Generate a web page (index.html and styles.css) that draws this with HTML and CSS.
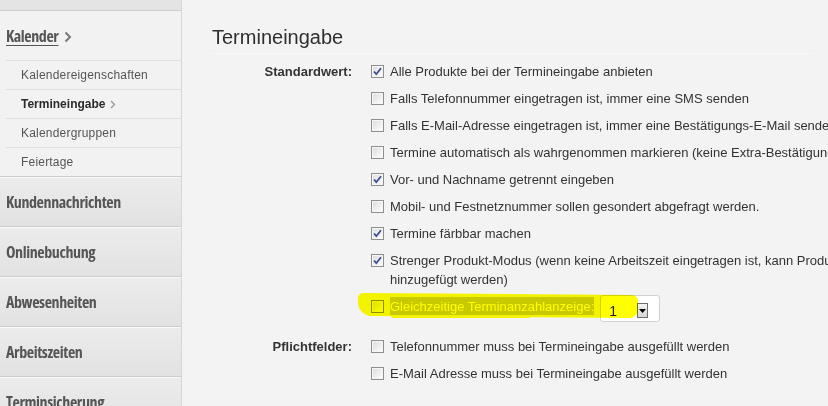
FILE: index.html
```html
<!DOCTYPE html>
<html lang="de">
<head>
<meta charset="utf-8">
<title>Termineingabe</title>
<link rel="stylesheet" href="styles.css">
</head>
<body>
<div class="page">
  <aside class="sidebar">
    <div class="nav-top"></div>
    <div class="nav-section">
      <div class="nav-head"><a class="nav-head-link" href="#"><span class="cond underline">Kalender</span></a><svg class="chev-big" viewBox="0 0 8 12" width="8" height="12"><path d="M1.5 1.5 L6 6 L1.5 10.5" fill="none" stroke="#7a7a7a" stroke-width="2"/></svg></div>
      <ul class="subnav">
        <li class="subnav-item">Kalendereigenschaften</li>
        <li class="subnav-item active">Termineingabe<svg class="chev-small" viewBox="0 0 6 9" width="6" height="9"><path d="M1 1 L4.5 4.5 L1 8" fill="none" stroke="#9a9a9a" stroke-width="1.4"/></svg></li>
        <li class="subnav-item">Kalendergruppen</li>
        <li class="subnav-item">Feiertage</li>
      </ul>
    </div>
    <div class="nav-block"><span class="cond">Kundennachrichten</span></div>
    <div class="nav-block"><span class="cond">Onlinebuchung</span></div>
    <div class="nav-block"><span class="cond">Abwesenheiten</span></div>
    <div class="nav-block"><span class="cond">Arbeitszeiten</span></div>
    <div class="nav-block"><span class="cond">Terminsicherung</span></div>
  </aside>

  <main class="content">
    <h1 class="title">Termineingabe</h1>

    <div class="form-group">
      <div class="group-label">Standardwert:</div>
      <div class="options">
        <div class="opt"><span class="cb checked"><svg viewBox="0 0 13 13" width="13" height="13"><path d="M3 6.5 L5.3 9.2 L10 3.2" fill="none" stroke="#3a4f8f" stroke-width="1.8"/></svg></span><span class="opt-text nowrap">Alle Produkte bei der Termineingabe anbieten</span></div>
        <div class="opt"><span class="cb"></span><span class="opt-text nowrap">Falls Telefonnummer eingetragen ist, immer eine SMS senden</span></div>
        <div class="opt"><span class="cb"></span><span class="opt-text nowrap">Falls E-Mail-Adresse eingetragen ist, immer eine Bestätigungs-E-Mail senden</span></div>
        <div class="opt"><span class="cb"></span><span class="opt-text nowrap">Termine automatisch als wahrgenommen markieren (keine Extra-Bestätigung nötig)</span></div>
        <div class="opt"><span class="cb checked"><svg viewBox="0 0 13 13" width="13" height="13"><path d="M3 6.5 L5.3 9.2 L10 3.2" fill="none" stroke="#3a4f8f" stroke-width="1.8"/></svg></span><span class="opt-text nowrap">Vor- und Nachname getrennt eingeben</span></div>
        <div class="opt"><span class="cb"></span><span class="opt-text nowrap">Mobil- und Festnetznummer sollen gesondert abgefragt werden.</span></div>
        <div class="opt"><span class="cb checked"><svg viewBox="0 0 13 13" width="13" height="13"><path d="M3 6.5 L5.3 9.2 L10 3.2" fill="none" stroke="#3a4f8f" stroke-width="1.8"/></svg></span><span class="opt-text nowrap">Termine färbbar machen</span></div>
        <div class="opt"><span class="cb checked"><svg viewBox="0 0 13 13" width="13" height="13"><path d="M3 6.5 L5.3 9.2 L10 3.2" fill="none" stroke="#3a4f8f" stroke-width="1.8"/></svg></span><span class="opt-text wrap">Strenger Produkt-Modus (wenn keine Arbeitszeit eingetragen ist, kann Produkt nicht hinzugefügt werden)</span></div>
        <div class="opt opt-select">
          <span class="cb"></span><span class="opt-text nowrap"><span class="selected-text">Gleichzeitige Terminanzahlanzeige:</span></span>
          <div class="select"><span class="select-value">1</span><span class="select-btn"><svg viewBox="0 0 7 4" width="7" height="4"><path d="M0 0 H7 L3.5 4 Z" fill="#000"/></svg></span></div>
          <div class="marker"></div>
          <div class="marker-tail"></div>
        </div>
      </div>
    </div>

    <div class="form-group">
      <div class="group-label">Pflichtfelder:</div>
      <div class="options">
        <div class="opt"><span class="cb"></span><span class="opt-text nowrap">Telefonnummer muss bei Termineingabe ausgefüllt werden</span></div>
        <div class="opt"><span class="cb"></span><span class="opt-text nowrap">E-Mail Adresse muss bei Termineingabe ausgefüllt werden</span></div>
      </div>
    </div>
  </main>
</div>
</body>
</html>
```

FILE: styles.css
```css
html, body {
  margin: 0;
  padding: 0;
  overflow: hidden;
  background: #f3f3f3;
}
body {
  font-family: "Liberation Sans", Arial, sans-serif;
  color: #333;
}
.page {
  display: flex;
  align-items: flex-start;
  width: 1200px;
  height: 406px;
}

/* Sidebar */
.sidebar {
  width: 181px;
  flex: none;
  border-right: 1px solid #d6d6d6;
  height: 406px;
  background: #f2f2f2;
  overflow: hidden;
}
.nav-top {
  height: 10px;
  background: #e4e4e4;
  border-bottom: 1px solid #cfcfcf;
}
.nav-head,
.nav-block {
  font-family: "Open Sans", "Liberation Sans", sans-serif;
  font-weight: bold;
  font-size: 16px;
  color: #555;
}
.cond {
  display: inline-block;
  font-stretch: 75%;
  letter-spacing: -0.4px;
}
.underline {
  text-decoration: underline;
  text-underline-offset: 3px;
  text-decoration-thickness: 1px;
}
.nav-head {
  height: 49px;
  display: flex;
  align-items: center;
  padding-left: 6px;
  box-sizing: border-box;
  padding-top: 1px;
}
.nav-head-link {
  color: #555;
  text-decoration: none;
}
.chev-big {
  margin-left: 6px;
  margin-top: 1px;
}
.subnav {
  list-style: none;
  margin: 0 0 0 6px;
  padding: 0;
}
.subnav-item {
  height: 29px;
  box-sizing: border-box;
  border-top: 1px solid #dedede;
  display: flex;
  align-items: center;
  padding-left: 15px;
  font-size: 12px;
  letter-spacing: 0.2px;
  color: #555;
}
.subnav-item.active {
  color: #2b2b2b;
  font-weight: bold;
  letter-spacing: 0;
}
.chev-small {
  margin-left: 5px;
}
.nav-block {
  height: 50px;
  box-sizing: border-box;
  display: flex;
  align-items: center;
  padding-left: 6px;
  background: linear-gradient(#ececec, #e2e2e2);
  border-top: 1px solid #cccccc;
  box-shadow: inset 0 1px 0 #fafafa;
}

/* Content */
.content {
  padding: 25px 0 0 30px;
  flex: none;
  width: 900px;
}
.title {
  margin: 0;
  font-weight: normal;
  font-size: 20px;
  line-height: 24px;
  color: #2f2f2f;
  padding-bottom: 4px;
  border-bottom: 1px solid #f8f8f8;
  margin-bottom: 4px;
  width: 600px;
}
.form-group {
  display: flex;
  align-items: flex-start;
  font-size: 13px;
  line-height: 19px;
}
.group-label {
  width: 140px;
  flex: none;
  text-align: right;
  font-weight: bold;
  padding-top: 4px;
  color: #333;
}
.options {
  margin-left: 19px;
}
.opt {
  display: flex;
  align-items: flex-start;
  padding: 4px 0;
}
.cb {
  flex: none;
  width: 11px;
  height: 11px;
  margin-top: 3px;
  margin-right: 6px;
  border: 1px solid #8e8f8f;
  background: linear-gradient(135deg, #dcdcdc, #f4f4f4 70%, #ffffff);
  box-shadow: inset 0 0 0 1px #f7f7f7;
  position: relative;
}
.cb svg {
  position: absolute;
  left: -1px;
  top: -1px;
}
.opt-text {
  color: #333;
}
.nowrap {
  white-space: nowrap;
}
.wrap {
  width: 500px;
}
.opt-select {
  position: relative;
  height: 32px;
}
.selected-text {
  background: #c9c9c9;
  color: #ffffff;
  padding: 2px 0 1px;
}
.select {
  width: 60px;
  height: 27px;
  box-sizing: border-box;
  margin-left: 6px;
  margin-top: -2px;
  border: 1px solid #d2d2d2;
  border-radius: 3px;
  background: #fff;
  display: flex;
  align-items: center;
  position: relative;
}
.select-value {
  padding-left: 8px;
  font-size: 14px;
  padding-top: 5px;
  color: #222;
  flex: 1;
}
.select-btn {
  width: 11px;
  height: 15px;
  margin-right: 11px;
  margin-top: 4px;
  border: 1px solid #6e6e6e;
  background: linear-gradient(#f4f4f4, #d6d6d6);
  display: flex;
  align-items: center;
  justify-content: center;
  box-sizing: border-box;
}
.marker {
  position: absolute;
  left: -13px;
  top: 1px;
  width: 280px;
  height: 23px;
  background: #ffff00;
  border-radius: 5px 6px 8px 14px;
  mix-blend-mode: multiply;
  transform: rotate(0.4deg);
}
.marker-tail {
  position: absolute;
  left: 20px;
  top: 20px;
  width: 140px;
  height: 5px;
  background: #ffff00;
  border-radius: 4px;
  mix-blend-mode: multiply;
}
```
